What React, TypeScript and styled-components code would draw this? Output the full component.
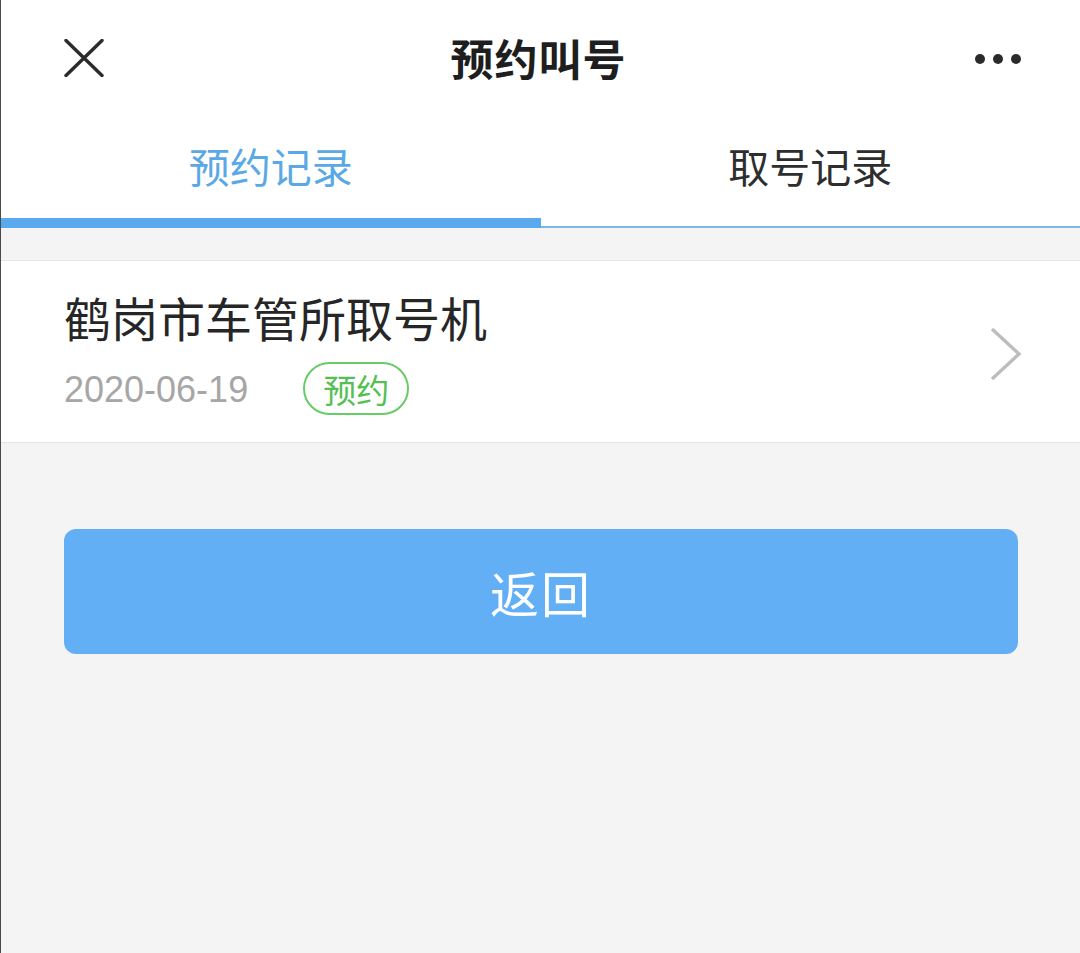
import * as React from 'react'
import styled, { createGlobalStyle } from 'styled-components'

const GlobalStyle = createGlobalStyle`
  html, body {
    margin: 0;
    padding: 0;
    background: #f4f4f4;
  }
  * {
    box-sizing: border-box;
  }
`

const cjk = `"Noto Sans CJK SC", "Noto Sans", sans-serif`

const App: React.FC = () => {
  const [tab, setTab] = React.useState(0)
  const tabs = ['预约记录', '取号记录']

  return (
    <>
      <GlobalStyle />
      <Page>
        <NavBar>
          <NavSide>
            <svg width="40" height="38" viewBox="0 0 40 38">
              <path d="M2 1.5 L38 36.5 M38 1.5 L2 36.5" stroke="#2b2b2b" strokeWidth="3.4" strokeLinecap="round" fill="none" />
            </svg>
          </NavSide>
          <NavTitle>预约叫号</NavTitle>
          <NavSide $right>
            <svg width="46" height="12" viewBox="0 0 46 12">
              <circle cx="5" cy="6" r="5" fill="#2b2b2b" />
              <circle cx="23" cy="6" r="5" fill="#2b2b2b" />
              <circle cx="41" cy="6" r="5" fill="#2b2b2b" />
            </svg>
          </NavSide>
        </NavBar>

        <TabBar>
          {tabs.map((label, i) => (
            <Tab key={label} $active={tab === i} onClick={() => setTab(i)}>
              {label}
            </Tab>
          ))}
        </TabBar>

        <RecordCard>
          <RecordInfo>
            <RecordTitle>鹤岗市车管所取号机</RecordTitle>
            <RecordMeta>
              <RecordDate>2020-06-19</RecordDate>
              <StatusTag>预约</StatusTag>
            </RecordMeta>
          </RecordInfo>
          <Chevron width="32" height="54" viewBox="0 0 32 54">
            <path d="M2 2 L29 27 L2 52" stroke="#bdbdbd" strokeWidth="3.4" fill="none" />
          </Chevron>
        </RecordCard>

        <BackButton>返回</BackButton>
      </Page>
    </>
  )
}

const Page = styled.div`
  min-height: 953px;
  background: #f4f4f4;
  border-left: 1px solid #4a4a4a;
  display: flex;
  flex-direction: column;
  font-family: ${cjk};
`

const NavBar = styled.div`
  height: 115px;
  background: #fff;
  display: grid;
  grid-template-columns: 1fr auto 1fr;
  align-items: center;
  padding: 0 59px 0 63px;
`

const NavSide = styled.div<{ $right?: boolean }>`
  display: flex;
  justify-content: ${p => (p.$right ? 'flex-end' : 'flex-start')};
  align-items: center;
  margin-top: ${p => (p.$right ? '2px' : '0')};
`

const NavTitle = styled.div`
  font-size: 43px;
  font-weight: 700;
  color: #1e1e1e;
  line-height: 1;
  letter-spacing: 1px;
  margin-left: -8px;
`

const TabBar = styled.div`
  display: flex;
  background: #fff;
  border-bottom: 2px solid #79b9ea;
`

const Tab = styled.div<{ $active?: boolean }>`
  flex: 1;
  height: 111px;
  display: flex;
  align-items: center;
  justify-content: center;
  padding-bottom: 12px;
  position: relative;
  font-size: 41px;
  color: ${p => (p.$active ? '#5aa9e6' : '#2e2e2e')};
  cursor: pointer;

  &::after {
    content: '';
    display: ${p => (p.$active ? 'block' : 'none')};
    position: absolute;
    left: 0;
    right: 0;
    bottom: -2px;
    height: 10px;
    background: #5aa9ef;
  }
`

const RecordCard = styled.div`
  margin-top: 32px;
  background: #fff;
  border-top: 1px solid #e8e8e8;
  border-bottom: 1px solid #e4e4e4;
  display: flex;
  align-items: center;
  justify-content: space-between;
  padding: 24px 58px 27px 63px;
`

const RecordInfo = styled.div`
  display: flex;
  flex-direction: column;
`

const RecordTitle = styled.div`
  font-size: 47px;
  line-height: 64px;
  color: #262626;
`

const RecordMeta = styled.div`
  display: flex;
  align-items: center;
  gap: 55px;
  margin-top: 13px;
`

const RecordDate = styled.span`
  font-family: "Liberation Sans", Arial, sans-serif;
  font-size: 36px;
  color: #a6a6a6;
  margin-top: 2px;
`

const StatusTag = styled.span`
  display: inline-flex;
  align-items: center;
  height: 53px;
  padding: 0 18px;
  border: 2.5px solid #66cc66;
  border-radius: 27px;
  font-size: 33px;
  color: #55bf55;
`

const Chevron = styled.svg`
  margin-top: 8px;
`

const BackButton = styled.button`
  margin: 86px 62px 0 63px;
  height: 125px;
  border: none;
  border-radius: 12px;
  background: #62aff5;
  color: #fff;
  font-family: ${cjk};
  font-size: 49px;
  letter-spacing: 2px;
  cursor: pointer;
`

export default App
